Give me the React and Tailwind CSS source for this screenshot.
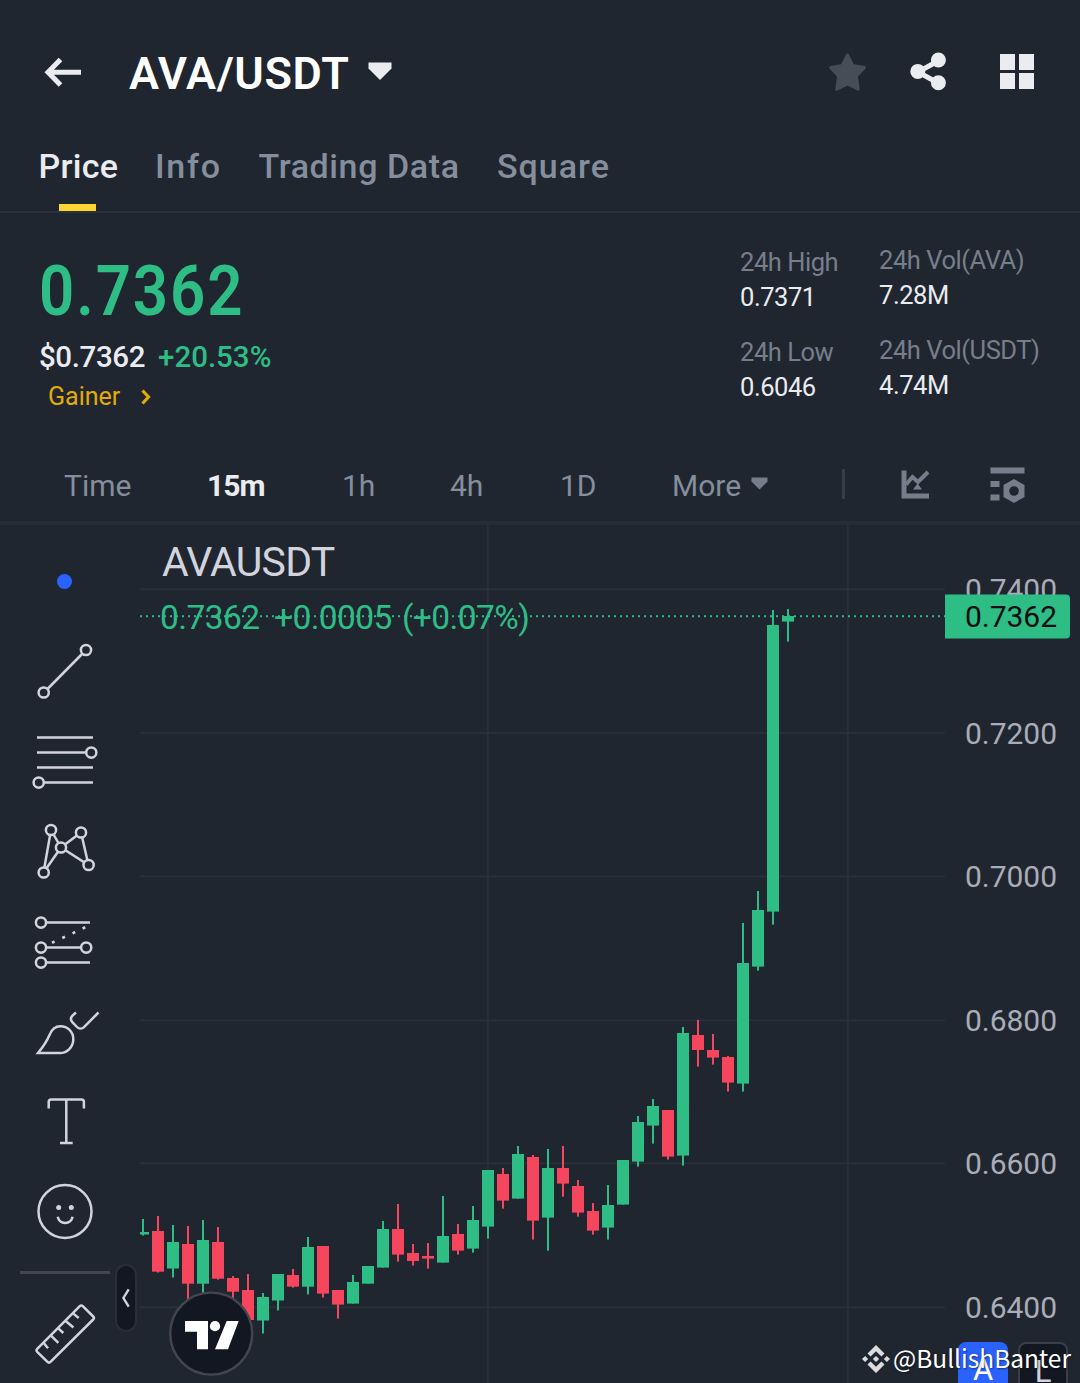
import clsx from 'clsx'

const tabs = [
  { label: 'Price', style: 'w-[79px] tracking-[0.3px]' },
  { label: 'Info', style: 'w-[66px] tracking-[1.7px]' },
  { label: 'Trading Data', style: 'w-[201px] tracking-[0.6px]' },
  { label: 'Square', style: 'w-[112px] tracking-[1px]' },
]

const stats = [
  [
    { label: '24h High', value: '0.7371' },
    { label: '24h Low', value: '0.6046' },
  ],
  [
    { label: '24h Vol(AVA)', value: '7.28M' },
    { label: '24h Vol(USDT)', value: '4.74M' },
  ],
]

const intervals = [
  { label: 'Time', width: 'w-[143px]' },
  { label: '15m', width: 'w-[135px]' },
  { label: '1h', width: 'w-[108px]' },
  { label: '4h', width: 'w-[110px]' },
  { label: '1D', width: 'w-[112px]' },
]

const GREEN = '#2ebd85'
const RED = '#f6465d'

// [up, wick top, body top, body bottom, wick bottom]
const candles = [
  [1, 1219, 1232, 1234.5, 1235.5],
  [0, 1216, 1231, 1271.7, 1272.5],
  [1, 1225, 1242, 1268.5, 1277.5],
  [0, 1226, 1244, 1283.7, 1300],
  [1, 1220, 1240, 1283.7, 1300],
  [0, 1227, 1242, 1278.7, 1279.6],
  [0, 1276, 1278, 1291.7, 1300],
  [0, 1274, 1290, 1320, 1320],
  [1, 1293, 1297, 1320.5, 1333.5],
  [1, 1274, 1274, 1300.5, 1310.4],
  [0, 1269, 1275, 1286.7, 1287.6],
  [1, 1237, 1247, 1286.7, 1294.4],
  [0, 1246, 1246, 1293.6, 1297.6],
  [0, 1290, 1290, 1304.6, 1318.6],
  [1, 1275, 1282, 1303.6, 1303.6],
  [1, 1266, 1266, 1283.7, 1283.7],
  [1, 1221, 1229, 1267.6, 1267.6],
  [0, 1204, 1229, 1254.6, 1261.6],
  [0, 1244, 1253, 1261, 1265.6],
  [0, 1243, 1256, 1258.6, 1268.6],
  [1, 1196, 1236, 1262.6, 1262.6],
  [0, 1224, 1234, 1250.6, 1254.6],
  [1, 1206, 1220, 1248.6, 1252.6],
  [1, 1170, 1170, 1226.6, 1238.6],
  [0, 1168, 1174, 1200.6, 1208.6],
  [1, 1146, 1154, 1198.6, 1198.6],
  [0, 1155, 1157, 1220.6, 1239.6],
  [1, 1149, 1168, 1217.6, 1250.6],
  [0, 1146, 1168, 1183.6, 1196.6],
  [0, 1180, 1186, 1212.6, 1216.6],
  [0, 1203, 1211, 1230.6, 1234.6],
  [1, 1185, 1205, 1227.6, 1239.6],
  [1, 1160, 1160, 1204.6, 1204.6],
  [1, 1116, 1122, 1161.6, 1166.6],
  [1, 1099, 1106, 1125.6, 1143.6],
  [0, 1110, 1110, 1156.6, 1159.6],
  [1, 1027, 1033, 1155.6, 1165.6],
  [0, 1020, 1035, 1050, 1066.6],
  [0, 1034, 1050, 1057.6, 1064.6],
  [0, 1056, 1057, 1082.6, 1091.6],
  [1, 923, 963, 1083.6, 1091.6],
  [1, 891, 910, 966.6, 970.6],
  [1, 610, 625, 911.6, 924.6],
  [1, 609, 616, 621.6, 641.6],
]

const levels = [
  { price: '0.7400', y: 589 },
  { price: '0.7200', y: 732.5 },
  { price: '0.7000', y: 876 },
  { price: '0.6800', y: 1020 },
  { price: '0.6600', y: 1163 },
  { price: '0.6400', y: 1307 },
]

function Tool({ children }) {
  return (
    <button className="block h-[90px] w-[90px] shrink-0">
      <svg width="90" height="90" viewBox="0 0 90 90" fill="none" stroke="#d1d4dc" strokeWidth="2.5">
        {children}
      </svg>
    </button>
  )
}

function Knobs({ at }) {
  return at.map(([x, y]) => <circle key={`${x}-${y}`} cx={x} cy={y} r="5.1" fill="#202630" />)
}

function Header() {
  return (
    <header className="flex h-[144px] items-center text-[#eaecef]">
      <svg className="mb-px ml-[44px]" width="38" height="30" viewBox="0 0 38 30" fill="none" stroke="#eaecef" strokeWidth="5">
        <path d="M37 15.2H5M16.5 2.5L4 15.2L16.5 28" />
      </svg>
      <h1 className="ml-[47px] mt-[3px] w-[219px] whitespace-nowrap text-[45px] font-semibold leading-[60px] tracking-[0.6px] text-white">
        AVA/USDT
      </h1>
      <svg className="ml-[20px]" width="24" height="20" viewBox="0 0 24 20" fill="#eaecef">
        <path d="M0.5 0.5H23.5V6.5L12 18L0.5 6.5Z" />
      </svg>
      <svg className="ml-[436px]" width="40" height="40" viewBox="0 0 40 40" fill="#474d57" stroke="#474d57" strokeWidth="3" strokeLinejoin="round">
        <path d="M19.5 3L24.8 13.6L36.3 15.6L28.4 24L30.2 37.2L19.5 31.8L8.8 37.2L10.6 24L2.7 15.6L14.2 13.6Z" />
      </svg>
      <svg className="ml-[42px]" width="38" height="40" viewBox="0 0 38 40" fill="#eaecef">
        <path d="M29 8.5L8 20L29 31.5" fill="none" stroke="#eaecef" strokeWidth="5" />
        <circle cx="28.4" cy="8" r="7.5" />
        <circle cx="7.8" cy="19.4" r="7.5" />
        <circle cx="28.4" cy="30.8" r="7.5" />
      </svg>
      <div className="mb-[2px] ml-[52px] grid grid-cols-2 gap-x-[4px] gap-y-[3px]">
        {[0, 1, 2, 3].map(i => <span key={i} className="h-[16px] w-[15px] bg-[#eaecef]" />)}
      </div>
    </header>
  )
}

function Tabs() {
  return (
    <nav className="flex h-[69px] gap-[37.5px] border-b-2 border-[#2b313b] pl-[38.5px]">
      {tabs.map((tab, i) => (
        <button key={tab.label} className={clsx('flex flex-col items-center justify-between', tab.style)}>
          <span className={clsx('w-full whitespace-nowrap text-left text-[34px] font-medium leading-[44px]', i === 0 ? 'text-[#eaecef]' : 'text-[#848e9c]')}>
            {tab.label}
          </span>
          {i === 0 && <span className="mr-[2px] h-[7px] w-[37px] bg-[#fcd535]" />}
        </button>
      ))}
    </nav>
  )
}

function Ticker() {
  return (
    <section className="flex h-[236px]">
      <div className="w-[740px] shrink-0 pl-[39px] pt-[43px]">
        <p className="h-[70px] origin-left scale-x-[0.87] whitespace-nowrap text-[71px] font-semibold leading-[70px] tracking-[2.2px] text-[#2ebd85]">0.7362</p>
        <p className="mt-[11px] flex whitespace-nowrap text-[29.5px] font-medium leading-[40px]">
          <span className="w-[119px] tracking-[-0.4px] text-[#eaecef]">$0.7362</span>
          <span className="text-[#2ebd85]">+20.53%</span>
        </p>
        <p className="flex items-center pl-[9px] text-[25px] leading-[40px] text-[#e0ab0b]">
          <span className="w-[93px]">Gainer</span>
          <svg width="10" height="16" viewBox="0 0 10 16" fill="none" stroke="currentColor" strokeWidth="3.2">
            <path d="M1.5 1.5L7.5 8L1.5 14.5" />
          </svg>
        </p>
      </div>
      {stats.map((column, i) => (
        <dl key={i} className={clsx('flex flex-col gap-[20px] whitespace-nowrap text-[25.5px] leading-[35px] tracking-[-0.45px]', i === 0 ? 'w-[139px] pt-[32px]' : 'pt-[30px]')}>
          {column.map(stat => (
            <div key={stat.label}>
              <dt className="text-[#777e8b]">{stat.label}</dt>
              <dd className="text-[#eaecef]">{stat.value}</dd>
            </div>
          ))}
        </dl>
      ))}
    </section>
  )
}

function IntervalBar() {
  return (
    <div className="flex h-[76px] items-center border-b-4 border-[#262c36] pl-[64px] text-[30px] text-[#848e9c]">
      {intervals.map(item => (
        <button key={item.label} className={clsx('text-left', item.width, item.label === '15m' && 'font-bold tracking-[-1px] text-[#eaecef]')}>
          {item.label}
        </button>
      ))}
      <button className="flex items-center">
        <span className="w-[79px] text-left">More</span>
        <svg className="mb-[3px]" width="17" height="13" viewBox="0 0 17 13" fill="#777e8b"><path d="M0.5 0.5H16.5V4.5L8.5 12.5L0.5 4.5Z" /></svg>
      </button>
      <span className="mb-[2px] ml-[74px] h-[30px] w-[3px] bg-[#373d48]" />
      <svg className="mb-px ml-[56px]" width="29" height="30" viewBox="0 0 29 30" fill="none" stroke="#777e8b">
        <path d="M3 0.5V26H28" strokeWidth="5" />
        <path d="M5 14.5L11.5 7L17 12L27 2" strokeWidth="4" />
        <path d="M16.5 13.5L21 19.5H12Z" fill="#777e8b" stroke="none" />
      </svg>
      <svg className="ml-[60px]" width="36" height="38" viewBox="0 0 36 38" fill="#777e8b">
        <path d="M0.5 1.5H34.5V7.5H0.5ZM0.5 15H9.5V21H0.5ZM0.5 28.5H9.5V34.5H0.5Z" />
        <path fillRule="evenodd" d="M24 13L34.5 19V31L24 37L13.5 31V19ZM24 20.2A4.8 4.8 0 1 0 24 29.8A4.8 4.8 0 1 0 24 20.2Z" />
      </svg>
    </div>
  )
}

function Toolbar() {
  return (
    <aside className="relative flex w-[140px] shrink-0 flex-col pl-[20px] pt-[11px]">
      <div className="flex h-[90px] w-[90px] shrink-0 items-center justify-center">
        <span className="mr-px h-[15px] w-[15px] rounded-full bg-[#2962ff]" />
      </div>
      <Tool>
        <path d="M24 66.5L66 24" />
        <Knobs at={[[66, 24], [23.7, 66.5]]} />
      </Tool>
      <Tool>
        <path d="M17 21.5H73M17 36.5H73M17 51.5H73M17 66.5H73" />
        <Knobs at={[[71.3, 36.6], [18.7, 66.6]]} />
      </Tool>
      <Tool>
        <path d="M23.5 66.5L31 24L41 41.5L61 26.5L68.5 59L41 41.5Z" />
        <Knobs at={[[31, 24], [61, 26.5], [41, 41.5], [23.7, 66.5], [68.6, 59]]} />
      </Tool>
      <Tool>
        <path d="M21 26.5H70M21 51.5H66M21 66.5H70" />
        <path d="M32 46.7L34.6 45.5M42.3 42L45 40.8M52.5 37.3L55.2 36M62.6 32.5L65.3 31.3" strokeWidth="2.6" />
        <Knobs at={[[21, 26.6], [21, 51.6], [66.2, 51.6], [21, 66.6]]} />
      </Tool>
      <Tool>
        <path d="M18 67C25 58.5 27 55 29.5 49C31.5 43.5 35.5 40.2 40.5 40.2C47.5 40.2 53.3 45.7 53.3 53.2C53.3 61 47 67 40 67Z" />
        <path d="M56 26.5L52.5 29.7C50.5 31.8 50.6 34.4 52.5 36.4L57 41C59 43 62 43 64 41.1L78.5 26.5" />
      </Tool>
      <Tool>
        <path d="M28.7 32.5V26Q28.7 23.5 31.2 23.5H61.4Q63.9 23.5 63.9 26V32.5M46.3 23.5V67M40 67H52.7" />
      </Tool>
      <Tool>
        <circle cx="45" cy="45.5" r="26.5" />
        <path d="M37.7 50.8C39.5 59 50.8 59 52.6 50.8" />
        <circle cx="38.7" cy="41.6" r="2.5" fill="#d1d4dc" stroke="none" />
        <circle cx="51.3" cy="41.6" r="2.5" fill="#d1d4dc" stroke="none" />
      </Tool>
      <span className="mb-[15px] mt-[15px] h-[3px] w-[90px] shrink-0 bg-[#434651]" />
      <Tool>
        <path d="M59.8 17.2Q61.3 15.7 62.8 17.2L73.2 27.5Q74.7 29 73.2 30.5L30.5 72.9Q29 74.4 27.5 72.9L17.2 62.8Q15.7 61.3 17.2 59.8Z" />
        <path d="M23.7 54L28 59.2M31 46.6L38.3 53.8M38.3 39.3L43.3 44M45.7 32L53.4 38.5M53 24.4L58.7 29" />
      </Tool>
      {/* collapse handle sits over the edge of the chart */}
      <button className="absolute left-[115px] top-[739px] flex h-[68px] w-[22px] items-center justify-center rounded-full border-2 border-[#292e39] bg-[#131722]">
        <svg width="8" height="20" viewBox="0 0 8 20" fill="none" stroke="#d1d4dc" strokeWidth="2.4"><path d="M6.7 1.3L1.4 10L6.7 18.7" /></svg>
      </button>
    </aside>
  )
}

function Chart() {
  return (
    <svg className="block shrink-0" width="940" height="858" viewBox="140 525 940 858">
      <g fill="#2a303a">
        {levels.map(l => <rect key={l.price} x="140" y={l.y - 0.5} width="805" height="1.8" />)}
        <rect x="487" y="521" width="1.8" height="862" />
        <rect x="847" y="521" width="1.8" height="862" />
      </g>
      {candles.map(([up, high, top, bottom, low], i) => (
        <g key={i} fill={up ? GREEN : RED}>
          <rect x={142 + i * 15} y={high} width="2" height={low - high} />
          <rect x={137 + i * 15} y={top} width="12" height={bottom - top} />
        </g>
      ))}
      <line x1="140" y1="616.3" x2="945" y2="616.3" stroke={GREEN} strokeWidth="2" strokeDasharray="2 4" />
      <g fill="#a9adb8" fontSize="30">
        {levels.map(l => <text key={l.price} x="965" y={l.y + 11} textLength="92">{l.price}</text>)}
      </g>
      <path d="M945 594.5H1066Q1070 594.5 1070 598.5V634.5Q1070 638.5 1066 638.5H945Z" fill={GREEN} />
      <text x="965" y="627" fontSize="30" textLength="92" fill="#0b0e11">0.7362</text>
    </svg>
  )
}

function Legend() {
  return (
    <div className="absolute left-[160px] top-[10px] whitespace-nowrap">
      <p className="pl-[2px] text-[41px] leading-[55px] tracking-[-0.75px] text-[#d1d4dc]">AVAUSDT</p>
      <p className="flex text-[33.5px] leading-[56px] tracking-[-0.6px] text-[#2ebd85]">
        <span className="w-[114px]">0.7362</span>
        <span className="w-[128px]">+0.0005</span>
        <span>(+0.07%)</span>
      </p>
    </div>
  )
}

function TradingViewBadge() {
  return (
    <svg className="absolute left-[168px] top-[766px]" width="86" height="86" viewBox="168 1291 86 86">
      <circle cx="211.2" cy="1333.6" r="41" fill="#131722" stroke="#434651" strokeWidth="2.4" />
      <path d="M185 1321H208V1349.3H197V1331.7H185ZM226.7 1321H238.7L228 1349.3H215Z" fill="#fff" />
      <circle cx="215" cy="1326.2" r="5.1" fill="#fff" />
    </svg>
  )
}

function ScaleButtons() {
  return (
    <div className="absolute left-[958px] top-[817px] flex gap-[10px] text-[31px] leading-[55px]">
      <button className="h-[50px] w-[50px] rounded-[8px] bg-[#2962ff] text-white">A</button>
      <button className="h-[50px] w-[50px] rounded-[8px] border-2 border-[#3a3e4a] bg-[#131722] text-[#d1d4dc]">L</button>
    </div>
  )
}

function Watermark() {
  return (
    <div className="absolute left-[862px] top-[819px] flex items-center whitespace-nowrap font-['Noto_Sans_CJK_SC',sans-serif] text-[24.5px] leading-[28px] text-white">
      <svg width="28" height="28" viewBox="0 0 28 28" fill="#dcdcdc">
        <path d="M14 0L22.5 8.5L19.4 11.6L14 6.2L8.6 11.6L5.5 8.5Z" />
        <path d="M14 28L22.5 19.5L19.4 16.4L14 21.8L8.6 16.4L5.5 19.5Z" />
        <path d="M14 10.9L17.1 14L14 17.1L10.9 14ZM3.1 10.9L6.2 14L3.1 17.1L0 14ZM24.9 10.9L28 14L24.9 17.1L21.8 14Z" />
      </svg>
      <span className="mb-[2px] ml-[3px] [text-shadow:1px_1px_2px_rgba(0,0,0,0.5)]">@BullishBanter</span>
    </div>
  )
}

export default function App() {
  return (
    <div className="h-[1383px] w-[1080px] overflow-hidden bg-[#202630] font-[Roboto,sans-serif]">
      <Header />
      <Tabs />
      <Ticker />
      <IntervalBar />
      <main className="relative flex h-[858px] overflow-hidden">
        <Toolbar />
        <Chart />
        <Legend />
        <TradingViewBadge />
        <ScaleButtons />
        <Watermark />
      </main>
    </div>
  )
}
